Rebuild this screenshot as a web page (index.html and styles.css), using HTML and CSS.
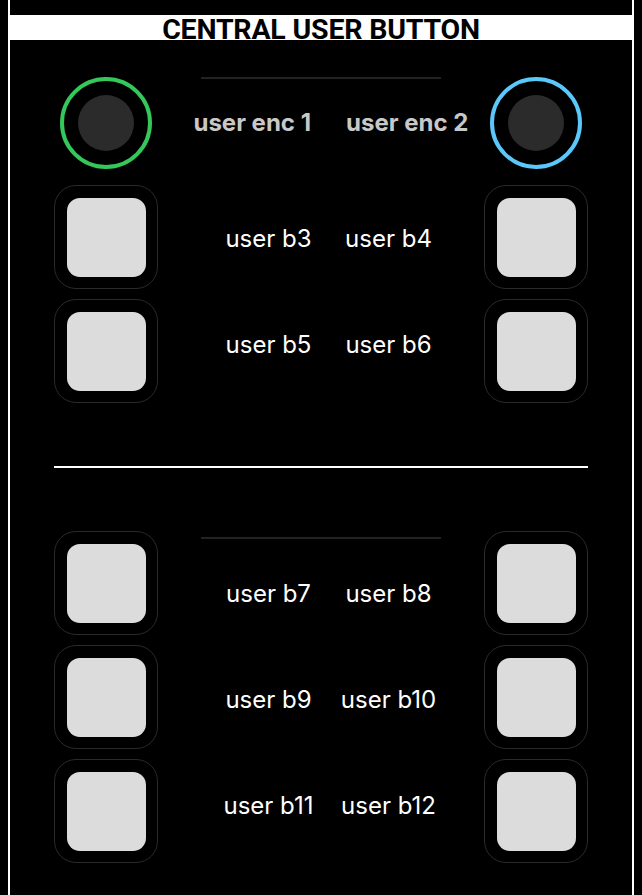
FILE: index.html
```html
<!DOCTYPE html>
<html lang="en">
<head>
  <meta charset="UTF-8">
  <meta name="viewport" content="width=device-width, initial-scale=1.0">
  <title>Central User Button</title>
  <link rel="stylesheet" href="styles.css">
</head>
<body>
  <div class="panel">
    <h1 class="title">CENTRAL USER BUTTON</h1>

    <section class="group group-top">
      <div class="side">
        <div class="encoder enc-green"><span class="knob"></span></div>
        <div class="pad"><span class="key"></span></div>
        <div class="pad"><span class="key"></span></div>
      </div>
      <div class="labels">
        <div class="rule"></div>
        <div class="label-row enc-row"><span>user enc 1</span><span>user enc 2</span></div>
        <div class="label-row"><span>user b3</span><span>user b4</span></div>
        <div class="label-row"><span>user b5</span><span>user b6</span></div>
      </div>
      <div class="side">
        <div class="encoder enc-blue"><span class="knob"></span></div>
        <div class="pad"><span class="key"></span></div>
        <div class="pad"><span class="key"></span></div>
      </div>
    </section>

    <hr class="divider">

    <section class="group group-bottom">
      <div class="side">
        <div class="pad"><span class="key"></span></div>
        <div class="pad"><span class="key"></span></div>
        <div class="pad"><span class="key"></span></div>
      </div>
      <div class="labels">
        <div class="rule"></div>
        <div class="label-row"><span>user b7</span><span>user b8</span></div>
        <div class="label-row"><span>user b9</span><span>user b10</span></div>
        <div class="label-row"><span>user b11</span><span>user b12</span></div>
      </div>
      <div class="side">
        <div class="pad"><span class="key"></span></div>
        <div class="pad"><span class="key"></span></div>
        <div class="pad"><span class="key"></span></div>
      </div>
    </section>
  </div>
</body>
</html>
```

FILE: styles.css
```css
html, body {
  background: #000;
}
body {
  margin: 0 8px;
  font-family: Inter, "Noto Sans", sans-serif;
  color: #fff;
}
.panel {
  border-left: 2px solid #fff;
  border-right: 2px solid #fff;
  min-height: 895px;
  box-sizing: border-box;
  padding-top: 15px;
}
.title {
  margin: 0;
  height: 25px;
  line-height: 29px;
  background: #fff;
  color: #000;
  text-align: center;
  font-family: Roboto, sans-serif;
  font-weight: 700;
  font-size: 28.5px;
  letter-spacing: -0.2px;
}
.group {
  display: flex;
  padding: 0 44px;
}
.group-top {
  padding-top: 37px;
}
.group-bottom {
  padding-top: 63px;
}
.side {
  width: 104px;
  display: flex;
  flex-direction: column;
  align-items: center;
  gap: 10px;
}
.encoder {
  width: 92px;
  height: 92px;
  box-sizing: border-box;
  border-radius: 50%;
  border: 4px solid;
  display: flex;
  align-items: center;
  justify-content: center;
  margin-bottom: 6px;
}
.enc-green { border-color: #34c759; }
.enc-blue { border-color: #5ac8fa; }
.knob {
  width: 56px;
  height: 56px;
  border-radius: 50%;
  background: #2b2b2b;
}
.pad {
  width: 104px;
  height: 104px;
  box-sizing: border-box;
  border: 1px solid #2a2a2a;
  border-radius: 22px;
  display: flex;
  align-items: center;
  justify-content: center;
}
.key {
  width: 79px;
  height: 79px;
  border-radius: 13px;
  background: #dcdcdc;
}
.labels {
  flex: 1;
}
.rule {
  width: 240px;
  height: 2px;
  margin: 0 auto;
  background: #222;
}
.group-bottom .rule {
  margin: 6px auto 3px;
}
.label-row {
  display: flex;
  justify-content: center;
  align-items: center;
  height: 106px;
  box-sizing: border-box;
  padding-left: 15px;
  padding-bottom: 3px;
  font-size: 24px;
}
.label-row span {
  width: 120px;
  text-align: center;
  white-space: nowrap;
}
.enc-row {
  height: 90px;
  margin-bottom: 18px;
  font-weight: 700;
  color: #c8c8c8;
}
.enc-row span:first-child {
  text-align: right;
  padding-right: 21px;
}
.enc-row span:last-child {
  text-align: left;
  padding-left: 14px;
}
.divider {
  margin: 63px 44px 0;
  border: none;
  height: 2px;
  background: #fff;
}
```
